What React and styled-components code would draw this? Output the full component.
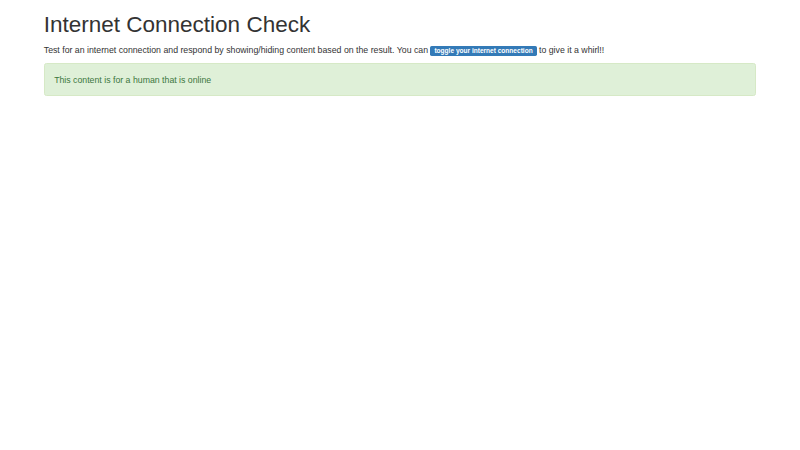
import React from 'react';
import styled, { createGlobalStyle } from 'styled-components';

const GlobalStyle = createGlobalStyle`
  html, body {
    margin: 0;
    background: #fff;
    font-family: "Liberation Sans", Arial, sans-serif;
    font-size: 8.75px;
    line-height: 1.428571;
    color: #333;
  }
`;

function App() {
  return (
    <>
      <GlobalStyle />
      <Container>
        <Title>Internet Connection Check</Title>
        <Lead>
          Test for an internet connection and respond by showing/hiding content based on the result. You can{' '}
          <Label>toggle your internet connection</Label> to give it a whirl!!
        </Lead>
        <Alert>This content is for a human that is online</Alert>
      </Container>
    </>
  );
}

const Container = styled.div`
  width: 712.5px;
  margin: 0 auto;
`;

const Title = styled.h1`
  margin: 12.5px 0 7px;
  font-size: 22.5px;
  font-weight: 500;
  line-height: 1.1;
  color: inherit;
`;

const Lead = styled.p`
  margin: 0 0 6.5px;
`;

const Label = styled.span`
  display: inline;
  padding: 0.2em 0.6em 0.3em;
  background: #337ab7;
  color: #fff;
  font-size: 75%;
  font-weight: bold;
  line-height: 1;
  white-space: nowrap;
  border-radius: 0.25em;
`;

const Alert = styled.div`
  margin-bottom: 12.5px;
  padding: 9.375px;
  background: #dff0d8;
  border: 1px solid #d6e9c6;
  border-radius: 2.5px;
  color: #3c763d;
`;

export default App;
